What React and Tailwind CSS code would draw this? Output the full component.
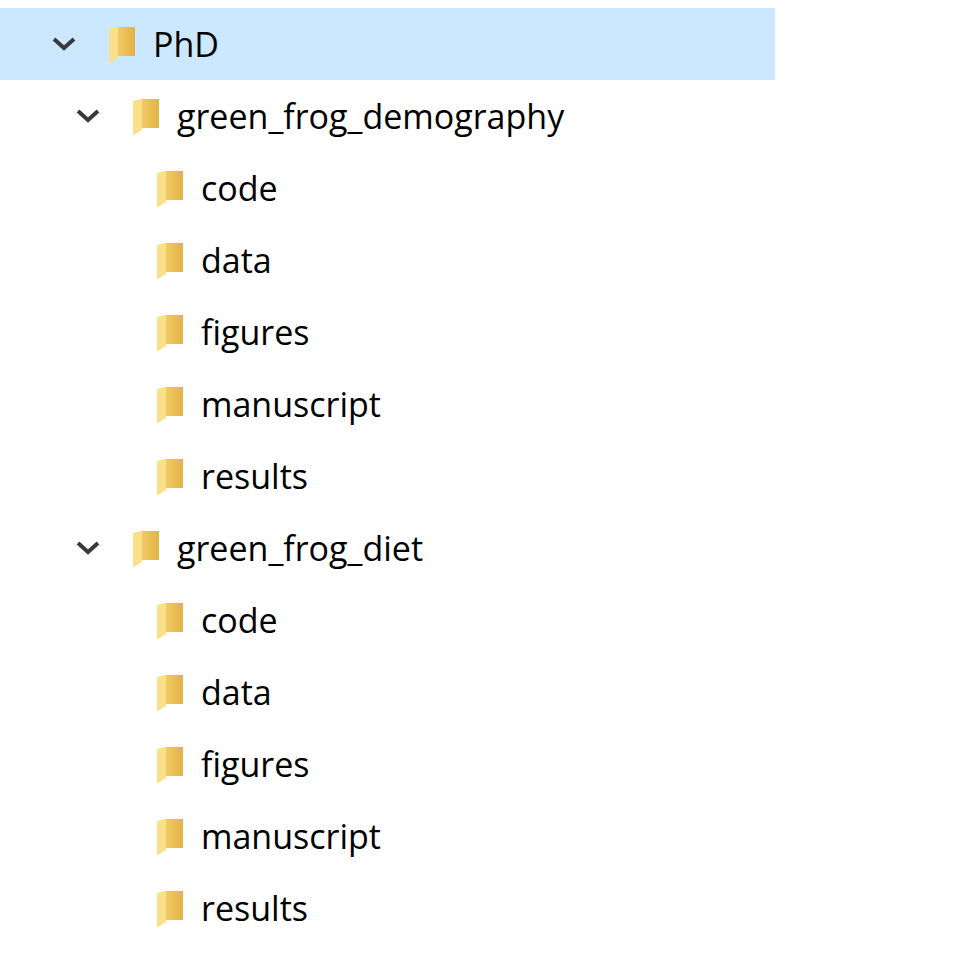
const TREE = [
  { name: 'PhD', level: 0, open: true, selected: true },
  { name: 'green_frog_demography', level: 1, open: true },
  { name: 'code', level: 2 },
  { name: 'data', level: 2 },
  { name: 'figures', level: 2 },
  { name: 'manuscript', level: 2 },
  { name: 'results', level: 2 },
  { name: 'green_frog_diet', level: 1, open: true },
  { name: 'code', level: 2 },
  { name: 'data', level: 2 },
  { name: 'figures', level: 2 },
  { name: 'manuscript', level: 2 },
  { name: 'results', level: 2 },
]

function Folder() {
  return (
    <svg width="30" height="42" viewBox="0 0 30 42">
      <defs>
        <linearGradient id="g" x1="0" y1="0" x2="1" y2="0">
          <stop offset="0" stopColor="#f3cd6a" />
          <stop offset="1" stopColor="#e4b243" />
        </linearGradient>
      </defs>
      <path d="M9 4 H28 V33 H9 Z" fill="url(#g)" />
      <path d="M2 6 L11 4 V35 L3 40 L2 39 Z" fill="#fbe08a" />
    </svg>
  )
}

function Chevron() {
  return (
    <svg width="26" height="16" viewBox="0 0 26 16">
      <path d="M3 3 L13 12 L23 3" fill="none" stroke="#3a3a3a" strokeWidth="4" />
    </svg>
  )
}

export default function App() {
  return (
    <div className="min-h-screen bg-white pt-2" style={{ fontFamily: '"Open Sans", "Noto Sans", sans-serif' }}>
      <div className="w-[775px]">
        {TREE.map((item, i) => (
          <div
            key={i}
            className={`h-[72px] flex items-center ${item.selected ? 'bg-[#cce8ff]' : ''}`}
            style={{ paddingLeft: 51 + item.level * 24 }}
          >
            <div className="w-[26px] flex justify-center">{item.open && <Chevron />}</div>
            <div className="ml-[30px] mr-[16px] flex items-center"><Folder /></div>
            <span className="text-[34px] text-black leading-none">{item.name}</span>
          </div>
        ))}
      </div>
    </div>
  )
}
